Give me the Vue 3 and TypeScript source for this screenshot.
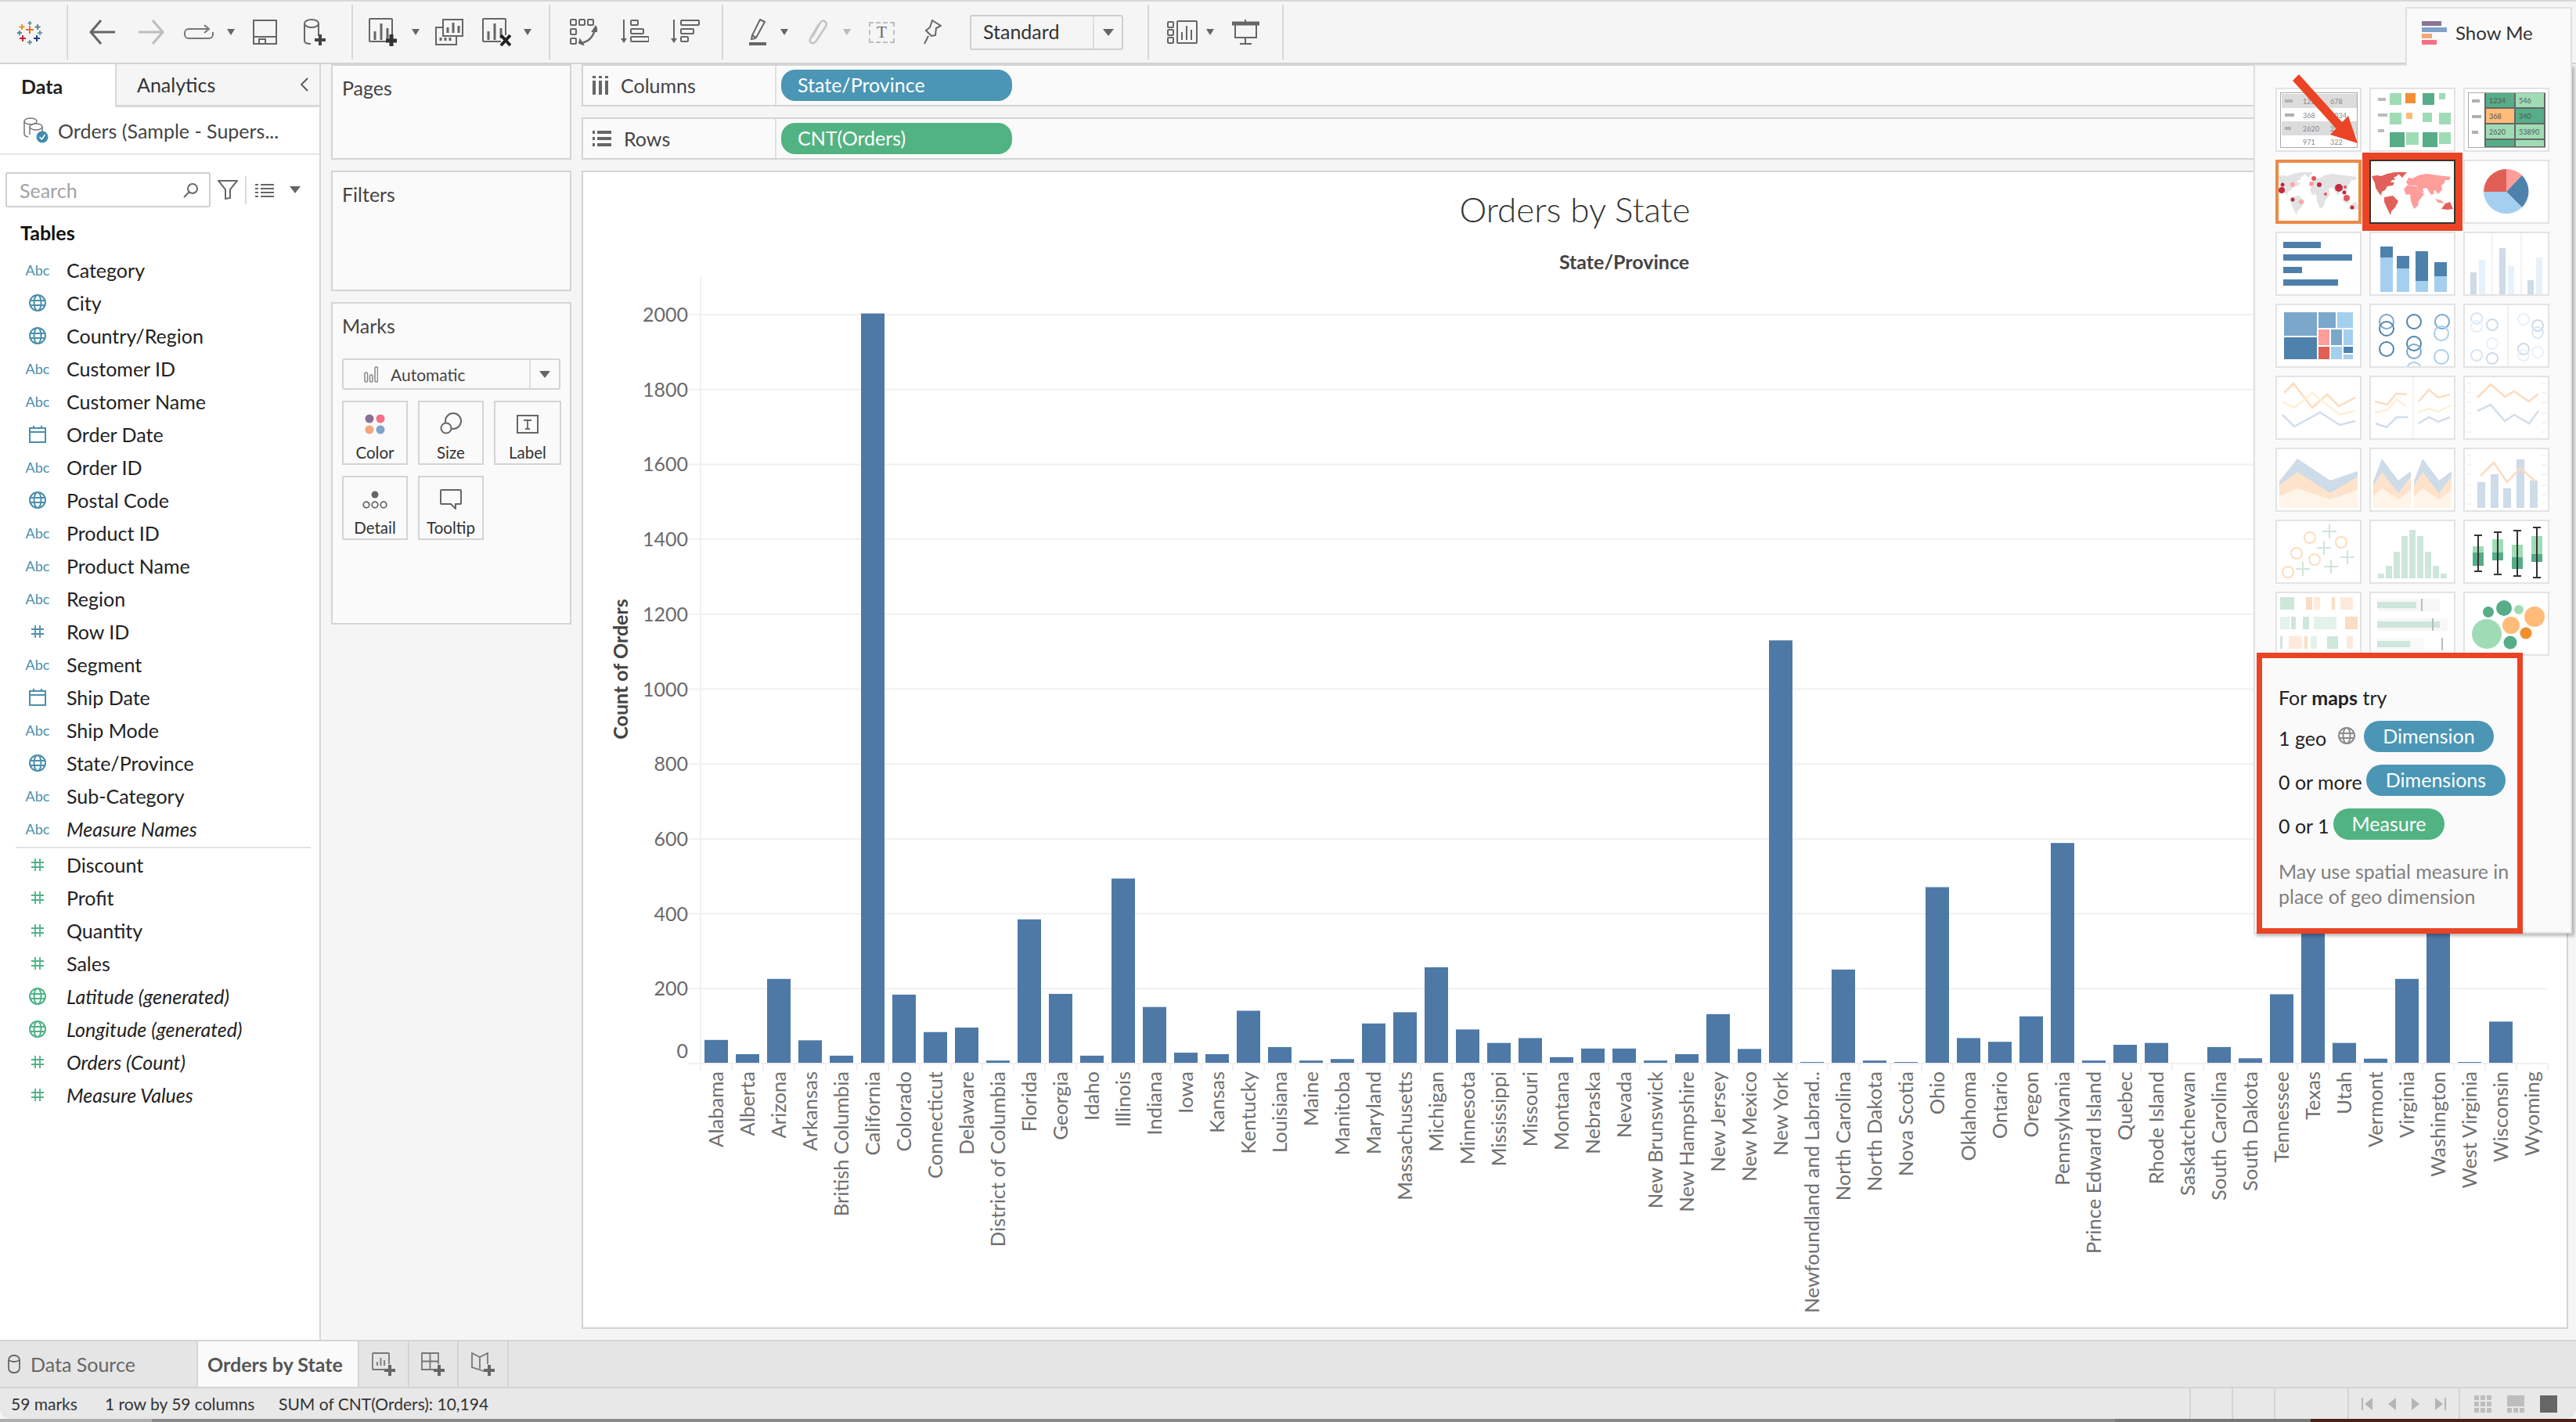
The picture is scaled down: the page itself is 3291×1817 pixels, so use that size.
<script setup lang="ts">
type Field = { name: string; kind: 'abc' | 'geo' | 'date' | 'num'; measure?: boolean; italic?: boolean };

const dimensions: Field[] = [
	{ name: 'Category', kind: 'abc' },
	{ name: 'City', kind: 'geo' },
	{ name: 'Country/Region', kind: 'geo' },
	{ name: 'Customer ID', kind: 'abc' },
	{ name: 'Customer Name', kind: 'abc' },
	{ name: 'Order Date', kind: 'date' },
	{ name: 'Order ID', kind: 'abc' },
	{ name: 'Postal Code', kind: 'geo' },
	{ name: 'Product ID', kind: 'abc' },
	{ name: 'Product Name', kind: 'abc' },
	{ name: 'Region', kind: 'abc' },
	{ name: 'Row ID', kind: 'num' },
	{ name: 'Segment', kind: 'abc' },
	{ name: 'Ship Date', kind: 'date' },
	{ name: 'Ship Mode', kind: 'abc' },
	{ name: 'State/Province', kind: 'geo' },
	{ name: 'Sub-Category', kind: 'abc' },
	{ name: 'Measure Names', kind: 'abc', italic: true },
];

const measures: Field[] = [
	{ name: 'Discount', kind: 'num', measure: true },
	{ name: 'Profit', kind: 'num', measure: true },
	{ name: 'Quantity', kind: 'num', measure: true },
	{ name: 'Sales', kind: 'num', measure: true },
	{ name: 'Latitude (generated)', kind: 'geo', measure: true, italic: true },
	{ name: 'Longitude (generated)', kind: 'geo', measure: true, italic: true },
	{ name: 'Orders (Count)', kind: 'num', measure: true, italic: true },
	{ name: 'Measure Values', kind: 'num', measure: true, italic: true },
];

const orders: [string, number][] = [
	['Alabama', 61], ['Alberta', 23], ['Arizona', 224], ['Arkansas', 60], ['British Columbia', 19],
	['California', 2001], ['Colorado', 182], ['Connecticut', 82], ['Delaware', 94], ['District of Columbia', 6],
	['Florida', 383], ['Georgia', 184], ['Idaho', 19], ['Illinois', 492], ['Indiana', 149],
	['Iowa', 27], ['Kansas', 23], ['Kentucky', 139], ['Louisiana', 42], ['Maine', 6],
	['Manitoba', 10], ['Maryland', 105], ['Massachusetts', 135], ['Michigan', 255], ['Minnesota', 89],
	['Mississippi', 53], ['Missouri', 66], ['Montana', 15], ['Nebraska', 38], ['Nevada', 38],
	['New Brunswick', 6], ['New Hampshire', 23], ['New Jersey', 130], ['New Mexico', 37], ['New York', 1128],
	['Newfoundland and Labrad..', 2], ['North Carolina', 249], ['North Dakota', 6], ['Nova Scotia', 2], ['Ohio', 469],
	['Oklahoma', 66], ['Ontario', 56], ['Oregon', 124], ['Pennsylvania', 587], ['Prince Edward Island', 6],
	['Quebec', 48], ['Rhode Island', 53], ['Saskatchewan', 0], ['South Carolina', 42], ['South Dakota', 12],
	['Tennessee', 183], ['Texas', 985], ['Utah', 53], ['Vermont', 11], ['Virginia', 224],
	['Washington', 506], ['West Virginia', 2], ['Wisconsin', 110], ['Wyoming', 0],
];

// chart geometry, in the svg's own pixels
const plotLeft = 150;
const baseline = 1139;
const colWidth = 40;
const perCount = 0.4785;
const ticks = [0, 200, 400, 600, 800, 1000, 1200, 1400, 1600, 1800, 2000];
const yOf = (v: number) => baseline - v * perCount;
// the zero label is pushed up inside the pane
const labelY = (v: number) => yOf(v) + (v === 0 ? -7 : 9);

// rough continents for the two map thumbnails
const america = '3,21 10,20 15,21 23,18 33,16 39,17 35,21 31,23 33,26 29,26 27,29 32,29 30,33 23,34 20,39 16,41 15,46 18,47 13,44 8,36 7,30 5,26';
const greenland = '35,16 48,16 42,23';
const southAmerica = '19,48 30,46 37,53 33,61 28,66 27,71 23,63 19,54';
const eurasia = '47,29 50,23 55,24 63,20 73,18 87,20 104,22 102,26 97,26 95,31 92,33 93,38 88,44 83,38 82,44 79,45 73,36 68,37 70,43 63,39 60,33 50,33';
const africa = '44,38 48,33 60,34 63,39 70,44 63,53 62,59 57,63 53,53 52,44 47,45';
const australia = '92,63 97,56 103,54 107,63 100,64';
const islands = '84,50 92,52 96,56 88,55';
const allLand = [america, greenland, southAmerica, eurasia, africa, australia, islands];
const darkLand = [america, greenland, southAmerica, australia];
const lightLand = [eurasia, africa, islands];

const symbols: [number, number, number, string][] = [
	[9, 32, 2.5, '#c0283f'], [8, 39, 4, '#c22a40'], [22, 32, 3, '#fca5a5'], [22, 51, 2.5, '#c0283f'],
	[33, 54, 3, '#fca5a5'], [49, 24, 3, '#e15759'], [46, 31, 3, '#ff9d9a'], [56, 32, 3, '#c22a40'],
	[64, 44, 2, '#e15759'], [81, 36, 5, '#c22a40'], [89, 35, 2, '#e15759'], [88, 42, 2.5, '#c22a40'],
	[91, 49, 4, '#e15759'], [98, 61, 2.5, '#c22a40'],
];

const G1 = '#9fdcb5';
const G2 = '#56ad88';
const heat: [number, number, number, number, string][] = [
	[26, 7, 15, 15, G1], [46, 7, 13, 13, '#f38f37'], [68, 7, 15, 15, G2], [89, 7, 8, 8, G1],
	[26, 32, 15, 15, G1], [47, 32, 8, 8, '#ffbb78'], [68, 32, 12, 12, G1], [89, 32, 15, 15, G1],
	[26, 57, 19, 19, G2], [47, 57, 16, 16, G1], [68, 57, 19, 19, G2], [89, 57, 15, 15, G1],
];
const highlight: [number, number, string, string][] = [
	[29, 7, G2, '1234'], [67, 7, G1, '546'], [29, 27, '#ffbb78', '368'], [67, 27, G2, '340'],
	[29, 47, G1, '2620'], [67, 47, G1, '53890'], [29, 67, G2, ''], [67, 67, G1, ''],
];
const treemap: [number, number, number, number, string][] = [
	[11, 11, 42, 30, '#7ba7cb'], [11, 43, 42, 28, '#4e82ad'], [55, 11, 22, 20, '#7ba7cb'], [79, 11, 20, 20, '#a5cfef'],
	[55, 33, 14, 20, '#ff9d9a'], [71, 33, 14, 20, '#7ba7cb'], [87, 33, 12, 20, '#a5cfef'], [55, 55, 14, 16, '#e15f55'],
	[71, 55, 14, 16, '#a5cfef'], [87, 55, 12, 8, '#4e82ad'], [87, 65, 12, 6, '#a5cfef'],
];
const rings: [number, number, string][] = [
	[22, 23, '#7ba7cb'], [22, 32, '#4e82ad'], [57, 23, '#4e82ad'], [22, 58, '#4e82ad'], [57, 51, '#4e82ad'],
	[57, 61, '#7ba7cb'], [93, 23, '#7ba7cb'], [92, 38, '#a5cfef'], [92, 68, '#a5cfef'], [57, 84, '#a5cfef'],
];
const fadedRings: [number, number, string][] = [
	[17, 19, '#d9e6f2'], [17, 29, '#e6f1fb'], [37, 27, '#cedbe8'], [37, 51, '#e6f1fb'], [17, 66, '#d9e6f2'],
	[37, 70, '#cedbe8'], [77, 20, '#e6f1fb'], [95, 28, '#cedbe8'], [95, 37, '#dbe6f0'], [77, 58, '#cedbe8'],
	[77, 66, '#e6f1fb'], [95, 62, '#e6f1fb'],
];
const gantt: [number, number, number, string][] = [
	[6, 7, 18, '#cfe6db'], [39, 7, 8, '#fbdcc4'], [49, 7, 8, '#feeadb'], [72, 7, 4, '#fbdcc4'], [83, 7, 16, '#feeadb'],
	[6, 32, 12, '#e3f2ea'], [20, 32, 6, '#cfe6db'], [35, 32, 8, '#cfe6db'], [49, 32, 29, '#e3f2ea'], [89, 32, 16, '#fbdcc4'],
	[6, 57, 3, '#cfe6db'], [17, 57, 17, '#feeadb'], [37, 57, 4, '#fbdcc4'], [45, 57, 8, '#e3f2ea'], [66, 57, 14, '#cfe6db'], [91, 57, 8, '#feeadb'],
];
const bubbles: [number, number, number, string][] = [
	[30, 54, 19, G1], [52, 21, 10, G2], [32, 26, 7, G2], [71, 23, 6, G1],
	[91, 32, 13, '#ffbb78'], [61, 43, 11, '#ffbb78'], [80, 53, 7.5, '#f28e2b'], [60, 65, 8.5, G2],
];
const histogram: [number, number][] = [[11, 69], [21, 59], [31, 41], [41, 21], [51, 13], [61, 21], [71, 41], [81, 59], [91, 69]];
const boxes: [number, number, number, number, number, number][] = [
	[19, 20, 66, 34, 42, 59], [44, 16, 70, 25, 42, 52], [69, 14, 72, 32, 48, 63], [94, 10, 74, 21, 44, 54],
];
const tickRows = [10, 22, 34, 48, 60, 72];
</script>

<template>
	<div class="app">
		<div class="topline"></div>

		<div class="toolbar">
			<!-- tableau mark -->
			<svg class="logo" width="32" height="32" viewBox="0 0 32 32" fill="none" stroke-width="2">
				<path d="M16 7v10M11 12h10" stroke="#e8762b" />
				<path d="M16 1v5M13.500 3.500h5" stroke="#7199a6" />
				<path d="M16 25v6M13 28h6" stroke="#7199a6" />
				<path d="M6 5v7M2.500 8.500h7" stroke="#eb912b" />
				<path d="M26 5v7M22.500 8.500h7" stroke="#5b879b" />
				<path d="M3 13v6M0 16h6" stroke="#59879b" />
				<path d="M29 13v6M26 16h6" stroke="#7199a6" />
				<path d="M7 19v8M3 23h8" stroke="#c72037" />
				<path d="M25 19v8M21 23h8" stroke="#1f447e" />
			</svg>
			<i class="sep m31"></i>

			<svg class="m27" width="33" height="32" viewBox="0 0 33 32" fill="none" stroke="#666" stroke-width="3"><path d="M33 16H3M15 1 2 16l13 15" /></svg>
			<svg class="m30" width="33" height="32" viewBox="0 0 33 32" fill="none" stroke="#bdbdbd" stroke-width="3"><path d="M0 16h30M18 1l13 15-13 15" /></svg>
			<svg class="m24" width="40" height="20" viewBox="0 0 40 20" fill="none" stroke="#777" stroke-width="2"><path d="M38 10v3a5 5 0 0 1-5 5H7a5 5 0 0 1-5-5V11a5 5 0 0 1 5-5h24" /><path d="M27 1l6 5-6 5" /></svg>
			<i class="tri m16"></i>
			<svg class="m23" width="31" height="32" viewBox="0 0 31 32" fill="none" stroke="#666" stroke-width="2"><path d="M1 1h29v30H1zM1 22h29M8 31v-6h8v6" /></svg>
			<svg class="m34" width="28" height="34" viewBox="0 0 28 34" fill="none" stroke="#666" stroke-width="2"><ellipse cx="10" cy="6" rx="9" ry="5" /><path d="M1 6v22q0 4 8 4M19 6v16" /><path d="M21 20v14M14 27h14" stroke="#444" stroke-width="4" /></svg>
			<i class="sep m33"></i>

			<svg class="m20" width="36" height="36" viewBox="0 0 36 36" fill="none" stroke="#666" stroke-width="2"><path d="M25 30H2q-1 0-1-1V2q0-1 1-1h27q1 0 1 1v22" /><path d="M8 28V17M16 28V7M24 28V13" stroke-width="3" /><path d="M29 21v15M22 29h14" stroke="#333" stroke-width="5" /></svg>
			<i class="tri m19"></i>
			<svg class="m20" width="36" height="34" viewBox="0 0 36 34" fill="none" stroke="#666" stroke-width="2"><path d="M10 1h25v21H10zM10 11H1v22h26v-10" /><path d="M16 18v-7M23 18V5M30 18V9" stroke-width="3" /><path d="M7 28v-4M13 28v-4M19 28v-4" stroke-width="3" /></svg>
			<svg class="m24" width="37" height="36" viewBox="0 0 37 36" fill="none" stroke="#666" stroke-width="2"><path d="M24 30H2q-1 0-1-1V2q0-1 1-1h27q1 0 1 1v20" /><path d="M8 28V17M16 28V7M24 26V13" stroke-width="3" /><path d="M24 22l12 13M36 22 24 35" stroke="#222" stroke-width="4" /></svg>
			<i class="tri m16"></i>
			<i class="sep m22"></i>

			<svg class="m25" width="35" height="34" viewBox="0 0 35 34" fill="none" stroke="#666" stroke-width="2"><rect x="1" y="1" width="7" height="7" rx="1" /><rect x="12" y="1" width="7" height="7" rx="1" /><rect x="23" y="1" width="7" height="7" rx="1" /><rect x="1" y="13" width="7" height="7" rx="1" /><rect x="1" y="25" width="7" height="7" rx="1" /><path d="M14 31q14-2 18-17" stroke-width="2.500" /><path d="M13 27l-1 4 5 2z" fill="#666" /><path d="M33 10l-4 6h7z" fill="#666" /></svg>
			<svg class="m30" width="36" height="32" viewBox="0 0 36 32" fill="none" stroke="#666" stroke-width="2"><path d="M4 0v26" /><path d="M0 24h8l-4 6z" fill="#666" stroke="none" /><rect x="13" y="1" width="9" height="6" rx="1" /><rect x="13" y="12" width="16" height="6" rx="1" /><rect x="13" y="22" width="23" height="6" rx="1" /></svg>
			<svg class="m28" width="37" height="32" viewBox="0 0 37 32" fill="none" stroke="#666" stroke-width="2"><path d="M4 0v26" /><path d="M0 24h8l-4 6z" fill="#666" stroke="none" /><rect x="13" y="1" width="23" height="6" rx="1" /><rect x="13" y="12" width="16" height="6" rx="1" /><rect x="13" y="22" width="9" height="6" rx="1" /></svg>
			<i class="sep m28"></i>

			<svg class="m33" width="22" height="34" viewBox="0 0 22 34" fill="none" stroke="#666" stroke-width="2"><path d="M14 1l6 3-11 20-5-3zM4 21l-1 5 5-1" /><path d="M0 32h22" stroke-width="4" /></svg>
			<i class="tri m18"></i>
			<svg class="m26" width="24" height="32" viewBox="0 0 24 32" fill="none" stroke="#c4c4c4" stroke-width="2.500"><path d="M5 22 15 4q3-4 6-1.500t1 6L10 27q-3 4-6 3t-2-5L13 6" /></svg>
			<i class="tri faint m20"></i>
			<div class="textbox m23">T</div>
			<svg class="m34" width="26" height="32" viewBox="0 0 26 32" fill="none" stroke="#666" stroke-width="2"><path d="M14 1l11 7-6 3-1 9-5 1-7-7 5-4zM9 21l-5 10" /></svg>
			<div class="fit m36"><span class="fit-text">Standard</span><span class="fit-arrow"><i class="tri big"></i></span></div>
			<i class="sep m31"></i>

			<svg class="m23" width="39" height="30" viewBox="0 0 39 30" fill="none" stroke="#666" stroke-width="2"><rect x="1" y="2" width="7" height="7" rx="1" /><rect x="1" y="12" width="7" height="7" rx="1" /><rect x="1" y="22" width="7" height="7" rx="1" /><rect x="13" y="1" width="25" height="28" rx="1" /><path d="M19 25V15M25 25V7M31 25V12" /></svg>
			<i class="tri m11"></i>
			<svg class="m23" width="35" height="32" viewBox="0 0 35 32" fill="none" stroke="#666" stroke-width="2"><path d="M17 0v4" /><path d="M0 5h35" stroke-width="5" /><path d="M4 6v17h27V6M17 23v8M10 31h15" /></svg>
			<i class="sep m29"></i>
		</div>

		<div class="main">
			<!-- data pane -->
			<aside class="side">
				<div class="side-tabs">
					<div class="side-tab active">Data</div>
					<div class="side-tab">
						<span>Analytics</span>
						<svg width="10" height="18" viewBox="0 0 10 18" fill="none" stroke="#555" stroke-width="1.800"><path d="M9 1 1 9l8 8" /></svg>
					</div>
				</div>
				<div class="source">
					<svg width="32" height="34" viewBox="0 0 32 34" fill="none" stroke="#777" stroke-width="1.500"><ellipse cx="9" cy="5" rx="8" ry="4" /><path d="M1 5v16q0 3 5 4" /><ellipse cx="16" cy="12" rx="8" ry="4" /><path d="M8 12v10M24 12v6" /><circle cx="24" cy="25" r="7.500" fill="#3f8cad" stroke="none" /><path d="M20.500 25l3 3 4-6" stroke="#fff" stroke-width="1.600" /></svg>
					<span>Orders (Sample - Supers...</span>
				</div>
				<div class="search-row">
					<div class="search">
						<span>Search</span>
						<svg width="20" height="20" viewBox="0 0 20 20" fill="none" stroke="#666" stroke-width="2"><circle cx="12" cy="8" r="6" /><path d="M7.500 12.500 1 19" /></svg>
					</div>
					<svg class="filter" width="26" height="25" viewBox="0 0 26 25" fill="none" stroke="#666" stroke-width="2"><path d="M1 1h24L16 12v11l-6 1V12z" /></svg>
					<i class="search-sep"></i>
					<svg class="list" width="24" height="18" viewBox="0 0 24 18" stroke="#666" stroke-width="2"><path d="M0 2h4M7 2h17M0 7h4M7 7h17M0 12h4M7 12h17M0 17h4M7 17h17" /></svg>
					<i class="tri side-tri"></i>
				</div>
				<div class="tables">Tables</div>
				<ul class="fields">
					<li v-for="f in dimensions" :key="f.name" class="field" :class="{ italic: f.italic }">
						<span class="field-icon" :class="{ green: f.measure }">
							<span v-if="f.kind === 'abc'" class="abc">Abc</span>
							<svg v-else-if="f.kind === 'geo'" width="22" height="22" viewBox="0 0 22 22" fill="none" stroke="currentColor" stroke-width="2"><circle cx="11" cy="11" r="10" /><ellipse cx="11" cy="11" rx="4.500" ry="10" /><path d="M1.500 8h19M1.500 14h19" /></svg>
							<svg v-else-if="f.kind === 'date'" width="22" height="22" viewBox="0 0 22 22" fill="none" stroke="currentColor" stroke-width="2"><rect x="1" y="3" width="20" height="18" /><path d="M1 8h20M6 0v4M16 0v4" /></svg>
							<svg v-else width="18" height="18" viewBox="0 0 18 18" fill="none" stroke="currentColor" stroke-width="1.800"><path d="M6 1v16M12 1v16M1 6h16M1 12h16" /></svg>
						</span>
						<span class="field-name">{{ f.name }}</span>
					</li>
				</ul>
				<hr class="divider" />
				<ul class="fields">
					<li v-for="f in measures" :key="f.name" class="field" :class="{ italic: f.italic }">
						<span class="field-icon" :class="{ green: f.measure }">
							<svg v-if="f.kind === 'geo'" width="22" height="22" viewBox="0 0 22 22" fill="none" stroke="currentColor" stroke-width="2"><circle cx="11" cy="11" r="10" /><ellipse cx="11" cy="11" rx="4.500" ry="10" /><path d="M1.500 8h19M1.500 14h19" /></svg>
							<svg v-else width="18" height="18" viewBox="0 0 18 18" fill="none" stroke="currentColor" stroke-width="1.800"><path d="M6 1v16M12 1v16M1 6h16M1 12h16" /></svg>
						</span>
						<span class="field-name">{{ f.name }}</span>
					</li>
				</ul>
			</aside>

			<!-- pages, filters, marks -->
			<div class="cards">
				<section class="card pages">Pages</section>
				<section class="card filters">Filters</section>
				<section class="card marks">
					<div class="marks-title">Marks</div>
					<div class="mark-type">
						<svg width="18" height="22" viewBox="0 0 18 22" fill="none" stroke="#888" stroke-width="1.500"><rect x="1" y="9" width="3.500" height="12" rx="1.500" /><rect x="7.500" y="12" width="3.500" height="9" rx="1.500" /><rect x="14" y="2" width="3.500" height="19" rx="1.500" /></svg>
						<span class="mark-name">Automatic</span>
						<span class="mark-arrow"><i class="tri big"></i></span>
					</div>
					<div class="mark-grid">
						<div class="mark-card">
							<svg width="26" height="26" viewBox="0 0 26 26"><circle cx="6" cy="6" r="5.500" fill="#8a6f96" /><circle cx="20" cy="6" r="5.500" fill="#f76f80" /><circle cx="6" cy="20" r="5.500" fill="#f2a67a" /><circle cx="20" cy="20" r="5.500" fill="#7fa3c9" /></svg>
							<span>Color</span>
						</div>
						<div class="mark-card">
							<svg width="28" height="28" viewBox="0 0 28 28" fill="none" stroke="#666" stroke-width="2"><circle cx="17" cy="11" r="10" /><circle cx="8" cy="20" r="6.500" fill="#fafafa" /></svg>
							<span>Size</span>
						</div>
						<div class="mark-card">
							<svg width="28" height="26" viewBox="0 0 28 26" fill="none" stroke="#666" stroke-width="2"><rect x="1" y="2" width="26" height="22" /><path d="M9 8h10M14 8v11M11 19h6" stroke-width="1.800" /></svg>
							<span>Label</span>
						</div>
						<div class="mark-card">
							<svg width="32" height="24" viewBox="0 0 32 24" fill="none" stroke="#666" stroke-width="1.800"><circle cx="16" cy="5" r="4.500" fill="#666" stroke="none" /><circle cx="5" cy="18" r="3.800" /><circle cx="16" cy="18" r="3.800" /><circle cx="27" cy="18" r="3.800" /></svg>
							<span>Detail</span>
						</div>
						<div class="mark-card">
							<svg width="28" height="26" viewBox="0 0 28 26" fill="none" stroke="#666" stroke-width="2"><path d="M2 1h24q1 0 1 1v16q0 1-1 1h-6v6l-6-6H2q-1 0-1-1V2q0-1 1-1z" /></svg>
							<span>Tooltip</span>
						</div>
					</div>
				</section>
			</div>

			<!-- shelves and view -->
			<div class="work">
				<div class="shelf">
					<div class="shelf-label">
						<svg width="20" height="24" viewBox="0 0 20 24" fill="#666"><path d="M0 0h4v3H0zM8 0h4v3H8zM16 0h4v3h-4zM0 6h4v18H0zM8 6h4v18H8zM16 6h4v18h-4z" /></svg>
						<span>Columns</span>
					</div>
					<div class="pill blue">State/Province</div>
				</div>
				<div class="shelf">
					<div class="shelf-label">
						<svg width="24" height="20" viewBox="0 0 24 20" fill="#666"><path d="M0 0h3v4H0zM6 0h18v4H6zM0 8h3v4H0zM6 8h18v4H6zM0 16h3v4H0zM6 16h18v4H6z" /></svg>
						<span>Rows</span>
					</div>
					<div class="pill green-pill">CNT(Orders)</div>
				</div>
				<div class="view">
					<svg class="chart" width="2534" height="1476" viewBox="0 0 2534 1476">
						<text x="1267" y="64" class="c-title" text-anchor="middle">Orders by State</text>
						<text x="1330" y="124" class="c-head" text-anchor="middle">State/Province</text>
						<text transform="translate(57 635) rotate(-90)" class="c-axis" text-anchor="middle">Count of Orders</text>

						<line :x1="plotLeft" :x2="plotLeft" y1="133" :y2="baseline" class="grid" />
						<g v-for="t in ticks" :key="t">
							<line :x1="plotLeft - 15" :x2="plotLeft + 2360" :y1="yOf(t)" :y2="yOf(t)" class="grid" />
							<text :x="plotLeft - 16" :y="labelY(t)" class="c-num" text-anchor="end">{{ t }}</text>
						</g>

						<g v-for="(s, i) in orders" :key="s[0]">
							<rect :x="plotLeft + 5 + i * colWidth" :y="baseline - 1 - s[1] * perCount" width="30" :height="s[1] * perCount" fill="#4e79a7" />
							<line :x1="plotLeft + i * colWidth" :x2="plotLeft + i * colWidth" :y1="baseline" :y2="baseline + 9" class="grid" />
							<text :transform="`translate(${plotLeft + 29 + i * colWidth} ${baseline + 10}) rotate(-90)`" class="c-state" text-anchor="end">{{ s[0] }}</text>
						</g>
						<line :x1="plotLeft + 2360" :x2="plotLeft + 2360" :y1="baseline" :y2="baseline + 9" class="grid" />
					</svg>
				</div>
			</div>
		</div>

		<div class="tabs">
			<div class="tab-source">
				<svg width="16" height="24" viewBox="0 0 16 24" fill="none" stroke="#666" stroke-width="1.800"><rect x="1" y="1" width="14" height="22" rx="6" /><path d="M1 7q7 4 14 0" /></svg>
				<span>Data Source</span>
			</div>
			<div class="tab-sheet">Orders by State</div>
			<div class="tab-add">
				<svg width="30" height="30" viewBox="0 0 30 30" fill="none" stroke="#777" stroke-width="1.800"><path d="M18 22H2q-1 0-1-1V2q0-1 1-1h19q1 0 1 1v13M7 17v-5M11.500 17V7M16 17v-7" /><path d="M23 16v14M16 23h14" stroke="#666" stroke-width="4" /></svg>
			</div>
			<div class="tab-add">
				<svg width="30" height="30" viewBox="0 0 30 30" fill="none" stroke="#777" stroke-width="1.800"><path d="M18 22H1V1h21v14M1 11.500h21M11.500 1v21" /><path d="M23 16v14M16 23h14" stroke="#666" stroke-width="4" /></svg>
			</div>
			<div class="tab-add">
				<svg width="30" height="30" viewBox="0 0 30 30" fill="none" stroke="#777" stroke-width="1.800"><path d="M16 24 1 19V1l10 5 10-5v14M11 6v15" /><path d="M23 16v14M16 23h14" stroke="#666" stroke-width="4" /></svg>
			</div>
		</div>

		<div class="status">
			<span class="s1">59 marks</span>
			<span class="s2">1 row by 59 columns</span>
			<span class="s3">SUM of CNT(Orders): 10,194</span>
			<div class="status-right">
				<i class="cell c54"></i>
				<i class="cell c54"></i>
				<i class="cell c94"></i>
				<div class="cell nav">
					<svg width="14" height="16" viewBox="0 0 14 16" fill="#b5b5b5"><path d="M0 0h2v16H0zM14 0v16L4 8z" /></svg>
					<svg width="10" height="16" viewBox="0 0 10 16" fill="#b5b5b5"><path d="M10 0v16L0 8z" /></svg>
					<svg width="10" height="16" viewBox="0 0 10 16" fill="#b5b5b5"><path d="M0 0v16l10-8z" /></svg>
					<svg width="14" height="16" viewBox="0 0 14 16" fill="#b5b5b5"><path d="M12 0h2v16h-2zM0 0v16l10-8z" /></svg>
				</div>
				<div class="cell sizes">
					<svg width="22" height="22" viewBox="0 0 22 22" fill="#bdbdbd"><path d="M0 0h6v6H0zM8 0h6v6H8zM16 0h6v6h-6zM0 8h6v6H0zM8 8h6v6H8zM16 8h6v6h-6zM0 16h6v6H0zM8 16h6v6H8zM16 16h6v6h-6z" /></svg>
					<svg width="22" height="22" viewBox="0 0 22 22" fill="#bdbdbd"><path d="M0 0h22v14H0zM0 16h6v6H0zM8 16h6v6H8zM16 16h6v6h-6z" /></svg>
					<svg width="22" height="22" viewBox="0 0 22 22" fill="#666"><path d="M0 0h22v22H0z" /></svg>
				</div>
			</div>
		</div>
		<div class="desk">
			<i class="d1"></i><i class="d2"></i><i class="d3"></i><i class="d4"></i>
		</div>

		<!-- show me flyout -->
		<div class="showme-tab">
			<svg width="32" height="30" viewBox="0 0 32 30"><rect width="25" height="6" fill="#8a7397" /><rect y="8" width="32" height="6" fill="#7fa3c9" /><rect y="16" width="13" height="6" fill="#f2a67a" /><rect y="24" width="19" height="6" fill="#f76f80" /></svg>
			<span>Show Me</span>
		</div>
		<div class="showme">
			<div class="thumbs">
				<svg class="thumb" viewBox="0 0 110 82">
					<rect x="6.500" y="6.500" width="98" height="70" fill="#fff" stroke="#aaa" />
					<rect x="8" y="8" width="96" height="18" fill="#dcdcdc" /><rect x="8" y="43" width="96" height="18" fill="#dcdcdc" />
					<rect x="12" y="15" width="10" height="4" fill="#b0b0b0" /><rect x="12" y="33" width="12" height="4" fill="#b0b0b0" /><rect x="12" y="50" width="8" height="4" fill="#b0b0b0" />
					<g class="t-num" fill="#888">
						<text x="35" y="21">1234</text><text x="70" y="21">678</text>
						<text x="35" y="39">368</text><text x="70" y="39">2034</text>
						<text x="35" y="56">2620</text><text x="70" y="56">2554</text>
						<text x="35" y="73">971</text><text x="70" y="73">322</text>
					</g>
				</svg>
				<svg class="thumb" viewBox="0 0 110 82">
					<rect x="11" y="13" width="10" height="4" fill="#bbb" /><rect x="11" y="33" width="12" height="4" fill="#bbb" /><rect x="11" y="53" width="8" height="4" fill="#bbb" />
					<rect v-for="(h, i) in heat" :key="i" :x="h[0]" :y="h[1]" :width="h[2]" :height="h[3]" :fill="h[4]" />
				</svg>
				<svg class="thumb" viewBox="0 0 110 82">
					<rect x="6.500" y="6.500" width="98" height="70" fill="#fff" stroke="#aaa" />
					<rect x="27" y="7" width="78" height="69" fill="#666" />
					<rect x="11" y="15" width="10" height="4" fill="#b0b0b0" /><rect x="11" y="35" width="12" height="4" fill="#b0b0b0" /><rect x="11" y="55" width="8" height="4" fill="#b0b0b0" />
					<g v-for="(c, i) in highlight" :key="i">
						<rect :x="c[0]" :y="c[1]" width="36" :height="i > 5 ? 8 : 18" :fill="c[2]" />
						<text :x="c[0] + 4" :y="c[1] + 13" class="t-num" fill="#555">{{ c[3] }}</text>
					</g>
				</svg>

				<svg class="thumb symbol" viewBox="0 0 110 82">
					<polygon v-for="p in allLand" :key="p" :points="p" fill="#e2e2e2" />
					<circle v-for="(c, i) in symbols" :key="i" :cx="c[0]" :cy="c[1]" :r="c[2]" :fill="c[3]" />
				</svg>
				<svg class="thumb filled" viewBox="0 0 110 82">
					<polygon v-for="p in lightLand" :key="p" :points="p" fill="#ff9d9a" />
					<polygon v-for="p in darkLand" :key="p" :points="p" fill="#e1605a" />
				</svg>
				<svg class="thumb" viewBox="0 0 110 82">
					<path d="M55 41V12a29 29 0 0 1 20 8z" fill="#ff9d9a" />
					<path d="M55 41 75 20a29 29 0 0 1 0 41z" fill="#4e82ad" />
					<path d="M55 41 75 61A29 29 0 0 1 26 41z" fill="#a5cfef" />
					<path d="M55 41H26a29 29 0 0 1 29-29z" fill="#e15f55" />
				</svg>

				<svg class="thumb" viewBox="0 0 110 82" fill="#4e7fab">
					<rect x="10" y="13" width="48" height="8" /><rect x="10" y="29" width="88" height="8" /><rect x="10" y="45" width="24" height="8" /><rect x="10" y="61" width="70" height="8" />
				</svg>
				<svg class="thumb" viewBox="0 0 110 82">
					<g fill="#4e82ad"><rect x="14" y="19" width="16" height="14" /><rect x="35" y="31" width="16" height="16" /><rect x="59" y="25" width="16" height="38" /><rect x="83" y="39" width="16" height="18" /></g>
					<g fill="#a5cfef"><rect x="14" y="33" width="16" height="44" /><rect x="35" y="47" width="16" height="30" /><rect x="59" y="63" width="16" height="14" /><rect x="83" y="57" width="16" height="20" /></g>
				</svg>
				<svg class="thumb" viewBox="0 0 110 82">
					<path d="M37 2v78M74 2v78" stroke="#efefef" stroke-width="1.500" />
					<g fill="#cedbe8"><rect x="9" y="52" width="8" height="28" /><rect x="46" y="21" width="8" height="59" /><rect x="82" y="62" width="8" height="18" /></g>
					<g fill="#e6f1fb"><rect x="20" y="36" width="8" height="44" /><rect x="57" y="44" width="8" height="36" /><rect x="93" y="33" width="8" height="47" /></g>
				</svg>

				<svg class="thumb" viewBox="0 0 110 82">
					<rect v-for="(r, i) in treemap" :key="i" :x="r[0]" :y="r[1]" :width="r[2]" :height="r[3]" :fill="r[4]" />
				</svg>
				<svg class="thumb" viewBox="0 0 110 82" fill="none" stroke-width="2">
					<circle v-for="(r, i) in rings" :key="i" :cx="r[0]" :cy="r[1]" r="9" :stroke="r[2]" />
				</svg>
				<svg class="thumb" viewBox="0 0 110 82" fill="none" stroke-width="2">
					<path d="M57 2v78" stroke="#efefef" />
					<circle v-for="(r, i) in fadedRings" :key="i" :cx="r[0]" :cy="r[1]" r="7" :stroke="r[2]" />
				</svg>

				<svg class="thumb" viewBox="0 0 110 82" fill="none" stroke-width="2.500">
					<polyline points="11,22 23,10 47,41 66,24 81,39 102,28" stroke="#fddcbf" />
					<polyline points="9,34 24,41 47,22 82,50 102,45" stroke="#fff0d6" />
					<polyline points="9,50 24,65 57,47 82,63 102,58" stroke="#d2deea" />
				</svg>
				<svg class="thumb" viewBox="0 0 110 82" fill="none" stroke-width="2.500">
					<path d="M56 2v78" stroke="#efefef" stroke-width="1.500" />
					<polyline points="7,33 23,37 34,23 48,24" stroke="#fddcbf" /><polyline points="7,47 23,44 35,30 47,39" stroke="#fff0d6" /><polyline points="8,61 22,66 35,53 49,53" stroke="#d2deea" />
					<polyline points="63,33 76,18 88,28 103,24" stroke="#fddcbf" /><polyline points="62,47 76,42 88,46 104,38" stroke="#fff0d6" /><polyline points="63,61 76,53 88,59 103,53" stroke="#d2deea" />
				</svg>
				<svg class="thumb" viewBox="0 0 110 82" fill="none" stroke-width="2.500">
					<path v-for="y in tickRows" :key="y" :d="`M5 ${y}h5M100 ${y}h6`" stroke="#f0f0f0" stroke-width="1.500" />
					<polyline points="18,28 35,11 53,27 65,20 84,33 96,23" stroke="#fddcbf" />
					<polyline points="18,45 35,37 53,58 65,50 84,61 96,45" stroke="#d2deea" />
				</svg>

				<svg class="thumb" viewBox="0 0 110 82">
					<polygon points="5,43 28,14 70,42 105,30 105,77 5,77" fill="#cedbe8" />
					<polygon points="5,48 28,31 70,58 105,37 105,77 5,77" fill="#fde3cc" />
					<polygon points="5,62 28,52 70,66 105,54 105,77 5,77" fill="#fef4e8" />
				</svg>
				<svg class="thumb" viewBox="0 0 110 82">
					<polygon points="5,43 16,14 37,42 53,30 53,77 5,77" fill="#cedbe8" />
					<polygon points="5,48 16,31 37,58 53,37 53,77 5,77" fill="#fde3cc" />
					<polygon points="5,62 16,52 37,66 53,54 53,77 5,77" fill="#fef4e8" />
					<polygon points="57,43 68,14 89,42 105,30 105,77 57,77" fill="#cedbe8" />
					<polygon points="57,48 68,31 89,58 105,37 105,77 57,77" fill="#fde3cc" />
					<polygon points="57,62 68,52 89,66 105,54 105,77 57,77" fill="#fef4e8" />
				</svg>
				<svg class="thumb" viewBox="0 0 110 82">
					<path v-for="y in tickRows" :key="y" :d="`M5 ${y}h5M100 ${y}h6`" stroke="#f0f0f0" stroke-width="1.500" />
					<g fill="#cedbe8"><rect x="18" y="44" width="10" height="33" /><rect x="35" y="34" width="10" height="43" /><rect x="51" y="52" width="10" height="25" /><rect x="68" y="15" width="10" height="62" /><rect x="85" y="42" width="10" height="35" /></g>
					<polyline points="22,36 39,19 56,44 73,26 92,43" fill="none" stroke="#fddcbf" stroke-width="2.500" />
				</svg>

				<svg class="thumb" viewBox="0 0 110 82" fill="none" stroke-width="2">
					<g stroke="#fddcbf"><circle cx="44" cy="23" r="7" /><circle cx="84" cy="29" r="7" /><circle cx="27" cy="43" r="7" /><circle cx="50" cy="51" r="7" /><circle cx="16" cy="67" r="7" /></g>
					<path d="M69 6v18M60 15h18M62 27v18M53 36h18M92 39v18M83 48h18M35 54v18M26 63h18M71 51v18M62 60h18" stroke="#cfe6db" />
				</svg>
				<svg class="thumb" viewBox="0 0 110 82" fill="#cfe6db">
					<rect v-for="b in histogram" :key="b[0]" :x="b[0]" :y="b[1]" width="8" :height="75 - b[1]" />
				</svg>
				<svg class="thumb" viewBox="0 0 110 82">
					<g v-for="b in boxes" :key="b[0]">
						<rect :x="b[0] - 7" :y="b[3]" width="14" :height="b[4] - b[3]" fill="#9fdcb5" />
						<rect :x="b[0] - 7" :y="b[4]" width="14" :height="b[5] - b[4]" fill="#56ad88" />
						<path :d="`M${b[0]} ${b[1]}V${b[2]}M${b[0] - 5} ${b[1]}h10M${b[0] - 5} ${b[2]}h10`" stroke="#333" stroke-width="2" fill="none" />
					</g>
				</svg>

				<svg class="thumb" viewBox="0 0 110 82">
					<rect v-for="(g, i) in gantt" :key="i" :x="g[0]" :y="g[1]" :width="g[2]" height="16" :fill="g[3]" />
				</svg>
				<svg class="thumb" viewBox="0 0 110 82">
					<rect x="10" y="9" width="80" height="16" fill="#f7f7f7" /><rect x="10" y="34" width="90" height="16" fill="#f7f7f7" /><rect x="10" y="59" width="60" height="16" fill="#f9f9f9" />
					<rect x="10" y="13" width="50" height="8" fill="#cfe6db" /><rect x="10" y="38" width="80" height="8" fill="#cfe6db" /><rect x="10" y="63" width="42" height="8" fill="#cfe6db" />
					<path d="M67 9v16M81 34v16M93 59v16" stroke="#bbb" stroke-width="2" />
				</svg>
				<svg class="thumb" viewBox="0 0 110 82">
					<circle v-for="(b, i) in bubbles" :key="i" :cx="b[0]" :cy="b[1]" :r="b[2]" :fill="b[3]" />
				</svg>
			</div>

			<svg class="arrow" width="95" height="100" viewBox="0 0 95 100"><polygon points="4,13 12,5 68,67 60,75" fill="#ea4425" /><polygon points="87,93 75,58 52,82" fill="#ea4425" /></svg>

			<div class="hint">
				<div class="hint-title">For <b>maps</b> try</div>
				<div class="hint-row">
					<span class="hl-geo">1 geo</span>
					<svg class="hint-globe" width="22" height="22" viewBox="0 0 22 22" fill="none" stroke="#8a8a8a" stroke-width="2"><circle cx="11" cy="11" r="10" /><ellipse cx="11" cy="11" rx="4.500" ry="10" /><path d="M1.500 8h19M1.500 14h19" /></svg>
					<span class="hint-pill blue p-dim">Dimension</span>
				</div>
				<div class="hint-row">
					<span class="hl-more">0 or more</span>
					<span class="hint-pill blue p-dims">Dimensions</span>
				</div>
				<div class="hint-row">
					<span class="hl-one">0 or 1</span>
					<span class="hint-pill green-pill p-meas">Measure</span>
				</div>
				<p class="hint-note">May use spatial measure in<br />place of geo dimension</p>
			</div>
		</div>
	</div>
</template>

<style scoped>
.app {
	position: relative;
	display: flex;
	flex-direction: column;
	width: 3291px;
	height: 1817px;
	overflow: hidden;
	background: #f5f5f5;
	color: #333;
	font-family: Lato, 'Open Sans', sans-serif;
	font-size: 25px;
}
.topline {
	height: 2px;
	background: #dcd6d6;
}
svg {
	display: block;
	flex: none;
}
i {
	display: block;
	flex: none;
}

/* toolbar */
.toolbar {
	display: flex;
	align-items: center;
	height: 80px;
	padding-left: 22px;
	border-bottom: 2px solid #d4d4d4;
	box-sizing: border-box;
}
.logo {
	transform: translateY(1px);
}
.sep {
	width: 2px;
	height: 70px;
	background: #d8d8d8;
}
.tri {
	width: 0;
	height: 0;
	border-left: 5px solid transparent;
	border-right: 5px solid transparent;
	border-top: 8px solid #666;
}
.tri.faint {
	border-top-color: #bbb;
}
.tri.big {
	border-left-width: 7px;
	border-right-width: 7px;
	border-top-width: 9px;
}
.m11 { margin-left: 11px; }
.m16 { margin-left: 16px; }
.m18 { margin-left: 18px; }
.m19 { margin-left: 19px; }
.m20 { margin-left: 20px; }
.m22 { margin-left: 22px; }
.m23 { margin-left: 23px; }
.m24 { margin-left: 24px; }
.m25 { margin-left: 25px; }
.m26 { margin-left: 26px; }
.m27 { margin-left: 27px; }
.m28 { margin-left: 28px; }
.m29 { margin-left: 29px; }
.m30 { margin-left: 30px; }
.m31 { margin-left: 31px; }
.m33 { margin-left: 33px; }
.m34 { margin-left: 34px; }
.m36 { margin-left: 36px; }
.textbox {
	width: 33px;
	height: 27px;
	box-sizing: border-box;
	border: 2px dashed #bdbdbd;
	text-align: center;
	font-family: 'Liberation Serif', serif;
	font-size: 21px;
	line-height: 23px;
	color: #666;
}
.fit {
	display: flex;
	width: 196px;
	height: 45px;
	box-sizing: border-box;
	border: 2px solid #cfcfcf;
	border-radius: 3px;
}
.fit-text {
	width: 157px;
	padding-left: 15px;
	box-sizing: border-box;
	line-height: 39px;
	border-right: 2px solid #dedede;
}
.fit-arrow {
	flex: 1;
	display: flex;
	align-items: center;
	justify-content: center;
}

/* layout */
.main {
	flex: 1;
	display: flex;
	min-height: 0;
}
.side {
	width: 410px;
	flex: none;
	box-sizing: border-box;
	background: #fff;
	border-right: 2px solid #d8d8d8;
}
.side-tabs {
	display: flex;
	height: 55px;
}
.side-tab {
	display: flex;
	align-items: center;
	justify-content: space-between;
	flex: 1;
	padding: 0 14px 0 26px;
	background: #f5f5f5;
	border-left: 2px solid #d8d8d8;
	border-bottom: 3px solid #d8d8d8;
}
.side-tab.active {
	flex: none;
	width: 147px;
	box-sizing: border-box;
	background: #fff;
	border: 0;
	font-weight: 700;
	padding-left: 27px;
	color: #222;
}
.source {
	display: flex;
	align-items: center;
	gap: 12px;
	height: 59px;
	padding-left: 30px;
	border-bottom: 2px solid #e6e6e6;
	color: #444;
}
.search-row {
	display: flex;
	align-items: center;
	height: 45px;
	margin-top: 22px;
	padding-left: 7px;
}
.search {
	display: flex;
	align-items: center;
	justify-content: space-between;
	width: 262px;
	height: 45px;
	box-sizing: border-box;
	padding: 0 13px 0 16px;
	border: 2px solid #d0d0d0;
	border-radius: 3px;
	color: #a2a2a2;
}
.filter {
	margin-left: 9px;
}
.search-sep {
	width: 2px;
	height: 36px;
	margin-left: 9px;
	background: #dcdcdc;
}
.list {
	margin-left: 11px;
}
.side-tri {
	margin-left: 20px;
	border-left-width: 7px;
	border-right-width: 7px;
	border-top-width: 9px;
}
.tables {
	margin: 11px 0 0 26px;
	height: 42px;
	line-height: 42px;
	font-weight: 700;
	color: #111;
}
.fields {
	list-style: none;
	margin: 6px 0 0;
	padding: 0;
}
.field {
	display: flex;
	align-items: center;
	height: 42px;
}
.field.italic {
	font-style: italic;
}
.field-icon {
	display: flex;
	align-items: center;
	justify-content: center;
	width: 32px;
	margin-left: 32px;
	color: #4b8fab;
}
.field-icon.green {
	color: #4fb286;
}
.abc {
	font-size: 18px;
	font-style: normal;
}
.field-name {
	margin-left: 21px;
	color: #222;
}
.divider {
	height: 2px;
	margin: 2px 11px 0 20px;
	border: 0;
	background: #e3e3e3;
}
.divider + .fields {
	margin-top: 0;
}

.cards {
	display: flex;
	flex-direction: column;
	width: 307px;
	flex: none;
	margin-left: 13px;
}
.card {
	box-sizing: border-box;
	background: #fafafa;
	border: 2px solid #d4d4d4;
	padding: 13px 12px;
	color: #444;
}
.pages {
	height: 122px;
}
.filters {
	height: 154px;
	margin-top: 14px;
}
.marks {
	height: 412px;
	margin-top: 14px;
}
.marks-title {
	line-height: 30px;
}
.mark-type {
	display: flex;
	align-items: center;
	height: 40px;
	margin-top: 27px;
	box-sizing: border-box;
	border: 2px solid #d4d4d4;
	border-radius: 3px;
	padding-left: 26px;
	font-size: 21px;
	color: #444;
}
.mark-name {
	margin-left: 16px;
	flex: 1;
}
.mark-arrow {
	display: flex;
	align-items: center;
	justify-content: center;
	width: 36px;
	height: 100%;
	border-left: 2px solid #e0e0e0;
}
.mark-grid {
	display: grid;
	grid-template-columns: 84px 84px 86px;
	gap: 14px 13px;
	margin-top: 14px;
}
.mark-card {
	display: flex;
	flex-direction: column;
	align-items: center;
	justify-content: flex-end;
	gap: 11px;
	height: 82px;
	box-sizing: border-box;
	padding-bottom: 2px;
	border: 2px solid #d4d4d4;
	font-size: 20.500px;
	color: #333;
}

.work {
	flex: 1;
	min-width: 0;
	display: flex;
	flex-direction: column;
	margin: 0 10px 0 13px;
}
.shelf {
	display: flex;
	align-items: center;
	height: 54px;
	box-sizing: border-box;
	background: #fafafa;
	border-top: 2px solid #d4d4d4;
	border-bottom: 2px solid #d4d4d4;
	border-left: 2px solid #d4d4d4;
	margin-bottom: 14px;
}
.shelf-label {
	display: flex;
	align-items: center;
	gap: 16px;
	width: 247px;
	height: 100%;
	box-sizing: border-box;
	padding-left: 12px;
	border-right: 2px solid #e0e0e0;
	color: #444;
}
.pill {
	width: 295px;
	height: 40px;
	margin-left: 6px;
	padding-left: 21px;
	box-sizing: border-box;
	border-radius: 18px;
	color: #fff;
	line-height: 38px;
}
.blue {
	background: #4b96b5;
}
.green-pill {
	background: #52b382;
}
.view {
	flex: 1;
	min-height: 0;
	background: #fff;
	border: 2px solid #d4d4d4;
	margin-bottom: 14px;
	box-sizing: border-box;
}
.chart {
	font-family: Lato, 'Open Sans', sans-serif;
}
.c-title {
	font-size: 44px;
	font-weight: 300;
	fill: #333;
}
.c-head {
	font-size: 25px;
	font-weight: 700;
	fill: #444;
}
.c-axis {
	font-size: 25px;
	font-weight: 700;
	fill: #444;
}
.c-num {
	font-size: 25px;
	fill: #6a6a6a;
}
.c-state {
	font-size: 25.600px;
	fill: #707070;
}
.grid {
	stroke: #f0f0f0;
	stroke-width: 2;
}

/* bottom bars */
.tabs {
	display: flex;
	height: 60px;
	flex: none;
	box-sizing: border-box;
	background: #e5e5e5;
	border-top: 2px solid #d4d4d4;
	color: #666;
}
.tab-source {
	display: flex;
	align-items: center;
	gap: 13px;
	width: 251px;
	padding-left: 10px;
	box-sizing: border-box;
}
.tab-sheet {
	width: 208px;
	background: #fafafa;
	border-left: 2px solid #d4d4d4;
	border-right: 2px solid #d4d4d4;
	box-sizing: border-box;
	padding-left: 12px;
	line-height: 58px;
	font-weight: 700;
	color: #555;
}
.tab-add {
	display: flex;
	align-items: center;
	justify-content: center;
	width: 63.500px;
	height: 58px;
	box-sizing: border-box;
	border-right: 2px solid #d4d4d4;
}
.status {
	display: flex;
	align-items: center;
	height: 41px;
	flex: none;
	box-sizing: border-box;
	background: #e8e8e8;
	border-top: 2px solid #d4d4d4;
	border-radius: 0 0 14px 14px;
	font-size: 21px;
	color: #333;
}
.s1 {
	margin-left: 14px;
	width: 120px;
}
.s2 {
	width: 222px;
}
.status-right {
	display: flex;
	margin-left: auto;
	height: 100%;
}
.cell {
	height: 100%;
	box-sizing: border-box;
	border-left: 2px solid #d4d4d4;
}
.c54 {
	width: 54px;
}
.c94 {
	width: 94px;
}
.nav {
	display: flex;
	align-items: center;
	justify-content: space-between;
	width: 142px;
	padding: 0 16px;
}
.sizes {
	display: flex;
	align-items: center;
	gap: 20px;
	width: 150px;
	padding-left: 18px;
}
.desk {
	display: flex;
	height: 4px;
	flex: none;
}
.d1 { width: 194px; background: #aeaeae; }
.d2 { width: 2508px; background: #8a8a8a; }
.d3 { width: 250px; background: #777; }
.d4 { flex: 1; background: #4a1f15; }

/* show me */
.showme-tab {
	position: absolute;
	left: 3073px;
	top: 9px;
	display: flex;
	align-items: center;
	gap: 11px;
	width: 213px;
	height: 75px;
	box-sizing: border-box;
	padding: 0 0 12px 19px;
	background: #fafafa;
	border: 2px solid #e0e0e0;
	border-bottom: 0;
	font-size: 24px;
	color: #333;
	z-index: 3;
}
.showme {
	position: absolute;
	left: 2879px;
	top: 82px;
	width: 407px;
	height: 1111px;
	box-sizing: border-box;
	padding: 30px 0 0 28px;
	background: #fafafa;
	border-left: 2px solid #e0e0e0;
	border-right: 2px solid #e0e0e0;
	border-top: 2px solid #e0e0e0;
	border-bottom: 2px solid #e0e0e0;
	box-shadow: 3px 3px 4px rgba(0, 0, 0, 0.28);
	z-index: 2;
}
.thumbs {
	display: grid;
	grid-template-columns: repeat(3, 110px);
	grid-auto-rows: 82px;
	gap: 10px;
	margin-top: -2px;
	margin-left: -2px;
}
.thumb {
	width: 110px;
	height: 82px;
	background: #fff;
	outline: 2px solid #e3e3e3;
	outline-offset: -2px;
}
.thumb.symbol {
	outline: 4px solid #ec8a47;
	outline-offset: -4px;
}
.thumb.filled {
	outline: 2px solid #333;
	outline-offset: -2px;
	box-shadow: 0 0 0 9px #ea4425;
	position: relative;
	z-index: 1;
}
.t-num {
	font-size: 9px;
}
.arrow {
	position: absolute;
	left: 44px;
	top: 6px;
	z-index: 2;
}
.hint {
	position: absolute;
	left: 2px;
	top: 750px;
	width: 340px;
	height: 359px;
	box-sizing: border-box;
	padding: 32px 0 0 21px;
	background: #fafafa;
	border: 7px solid #ea4425;
	z-index: 3;
	color: #222;
}
.hint-title {
	height: 36px;
	line-height: 36px;
}
.hint-row {
	display: flex;
	align-items: center;
	height: 40px;
	margin-top: 16px;
}
.hint-title + .hint-row {
	margin-top: 12px;
}
.hl-geo {
	width: 76px;
	padding-top: 4px;
}
.hint-globe {
	margin-right: 11px;
	transform: translateY(-1px);
}
.hl-more {
	width: 112px;
	padding-top: 4px;
}
.hl-one {
	width: 70px;
	padding-top: 4px;
}
.hint-pill {
	height: 40px;
	border-radius: 20px;
	color: #fff;
	text-align: center;
	line-height: 38px;
}
.p-dim {
	width: 166px;
}
.p-dims {
	width: 178px;
}
.p-meas {
	width: 142px;
}
.hint-note {
	margin: 24px 0 0;
	line-height: 32px;
	color: #7f7f7f;
	white-space: nowrap;
}
</style>

<style>
html,
body {
	margin: 0;
	background: #f5f5f5;
}
</style>
